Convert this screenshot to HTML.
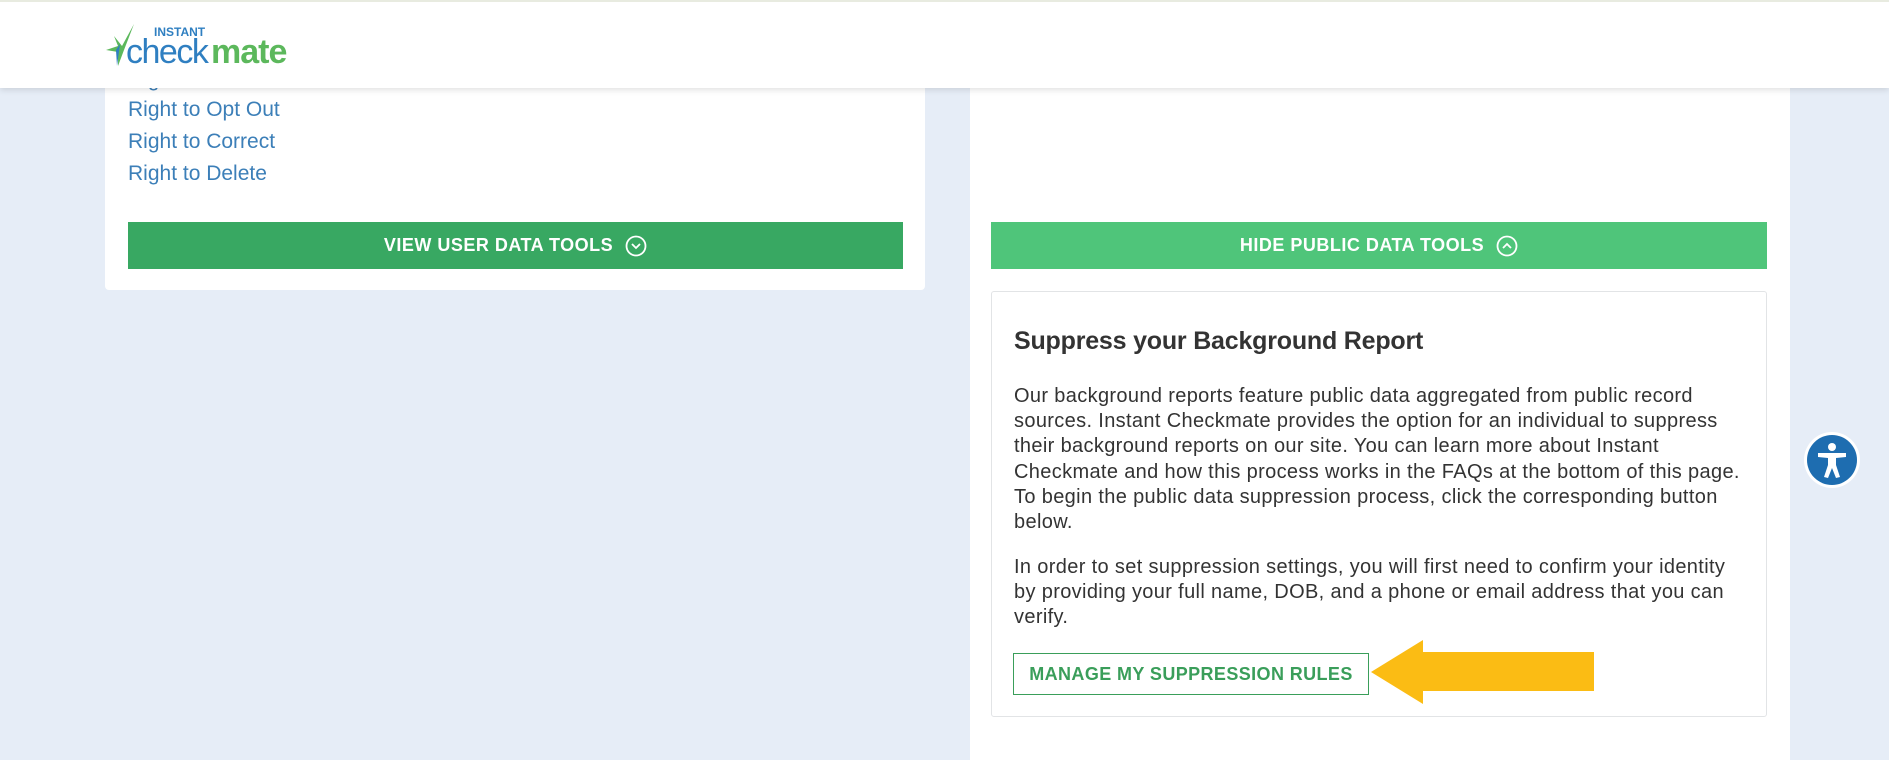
<!DOCTYPE html>
<html><head><meta charset="utf-8"><style>
*{margin:0;padding:0;box-sizing:border-box}
body{width:1889px;height:725px;overflow:hidden;background:#e6edf7;font-family:"Liberation Sans",sans-serif;position:relative}
.hdr{position:absolute;left:0;top:0;width:1889px;height:88px;background:#fff;box-shadow:0 2px 6px rgba(0,0,0,.12);border-top:2px solid #e8ebe0;z-index:5}
.card{position:absolute;background:#fff;border-radius:4px}
.lnk{position:absolute;left:128px;color:#3c7fb8;font-size:21px;white-space:nowrap}
.btn{position:absolute;height:47px;color:#fff;font-weight:bold;font-size:18px;display:flex;align-items:center;justify-content:center;letter-spacing:.5px}
.btn svg{margin-left:12px}
.p{position:absolute;left:1014px;color:#333;font-size:20px;letter-spacing:.35px;line-height:25.2px;white-space:nowrap}
</style></head><body>
<div class="hdr">
<svg style="position:absolute;left:104px;top:20px" width="220" height="46" viewBox="0 0 220 46">
<path d="M2 28 L14 24 L10 14 L18 24 L30 2 L20 28 L14 44 L14 30 Z" fill="#5cb85c"/>
<path d="M12 28 L16 22 L13 44 Z" fill="#2f7fc1"/>
<text x="50" y="14" font-family="Liberation Sans" font-size="12" font-weight="bold" fill="#2f7fc1">INSTANT</text>
<text x="22" y="41" font-family="Liberation Sans" font-size="34" fill="#2f7fc1" letter-spacing="-1.5">check</text>
<text x="107" y="41" font-family="Liberation Sans" font-size="34" font-weight="bold" fill="#5cb85c" letter-spacing="-1">mate</text>
</svg>
</div>
<div class="card" style="left:105px;top:60px;width:820px;height:230px"></div>
<div class="lnk" style="top:68px">Right to Access</div>
<div class="lnk" style="top:98px">Right to Opt Out</div>
<div class="lnk" style="top:130px">Right to Correct</div>
<div class="lnk" style="top:162px">Right to Delete</div>
<div class="btn" style="left:128px;top:222px;width:775px;background:#38a862">VIEW USER DATA TOOLS<svg width="22" height="22" viewBox="0 0 22 22"><circle cx="11" cy="11" r="9.5" fill="none" stroke="#fff" stroke-width="1.8"/><path d="M7 9l4 4 4-4" fill="none" stroke="#fff" stroke-width="1.8"/></svg></div>
<div class="card" style="left:970px;top:60px;width:820px;height:700px;border-radius:0"></div>
<div class="btn" style="left:991px;top:222px;width:776px;background:#4fc57a">HIDE PUBLIC DATA TOOLS<svg width="22" height="22" viewBox="0 0 22 22"><circle cx="11" cy="11" r="9.5" fill="none" stroke="#fff" stroke-width="1.8"/><path d="M7 13l4-4 4 4" fill="none" stroke="#fff" stroke-width="1.8"/></svg></div>
<div style="position:absolute;left:991px;top:291px;width:776px;height:426px;border:1px solid #e2e4e6;border-radius:3px;background:#fff"></div>
<div style="position:absolute;left:1014px;top:327px;font-size:25px;font-weight:bold;color:#333;letter-spacing:-.2px">Suppress your Background Report</div>
<div class="p" style="top:384px">Our background reports feature public data aggregated from public record<br>sources. Instant Checkmate provides the option for an individual to suppress<br>their background reports on our site. You can learn more about Instant<br>Checkmate and how this process works in the FAQs at the bottom of this page.<br>To begin the public data suppression process, click the corresponding button<br>below.</div>
<div class="p" style="top:555px">In order to set suppression settings, you will first need to confirm your identity<br>by providing your full name, DOB, and a phone or email address that you can<br>verify.</div>
<div style="position:absolute;left:1013px;top:653px;width:356px;height:42px;border:1.5px solid #3a9e5a;color:#3a9e5a;font-size:18px;font-weight:bold;display:flex;align-items:center;justify-content:center;letter-spacing:.4px">MANAGE MY SUPPRESSION RULES</div>
<svg style="position:absolute;left:1371px;top:640px" width="224" height="64" viewBox="0 0 224 64"><path d="M0 32 L52 0 L52 12 L223 12 L223 51 L52 51 L52 64 Z" fill="#fbbc14"/></svg>
<svg style="position:absolute;left:1803px;top:431px" width="58" height="58" viewBox="0 0 58 58"><circle cx="29" cy="29" r="28" fill="#fff"/><circle cx="29" cy="29" r="25" fill="#1e6db0"/><circle cx="29" cy="16" r="4" fill="#fff"/><path d="M15 22 L43 22 L43 26 L33 27 L33 34 L37 46 L33 47 L29 37 L25 47 L21 46 L25 34 L25 27 L15 26 Z" fill="#fff"/></svg>
</body></html>
